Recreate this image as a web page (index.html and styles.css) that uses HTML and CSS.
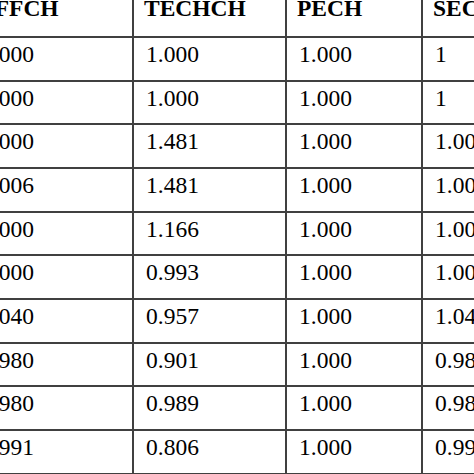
FILE: index.html
```html
<!DOCTYPE html>
<html>
<head>
<meta charset="utf-8">
<link rel="stylesheet" href="styles.css">
</head>
<body>
<table class="grid">
  <colgroup>
    <col class="c1"><col class="c2"><col class="c3"><col class="c4">
  </colgroup>
  <thead>
    <tr><th>EFFCH</th><th>TECHCH</th><th>PECH</th><th>SECH</th></tr>
  </thead>
  <tbody>
    <tr><td>1.000</td><td>1.000</td><td>1.000</td><td>1</td></tr>
    <tr><td>1.000</td><td>1.000</td><td>1.000</td><td>1</td></tr>
    <tr><td>1.000</td><td>1.481</td><td>1.000</td><td>1.000</td></tr>
    <tr><td>1.006</td><td>1.481</td><td>1.000</td><td>1.006</td></tr>
    <tr><td>1.000</td><td>1.166</td><td>1.000</td><td>1.000</td></tr>
    <tr><td>1.000</td><td>0.993</td><td>1.000</td><td>1.000</td></tr>
    <tr><td>1.040</td><td>0.957</td><td>1.000</td><td>1.040</td></tr>
    <tr><td>0.980</td><td>0.901</td><td>1.000</td><td>0.980</td></tr>
    <tr><td>0.980</td><td>0.989</td><td>1.000</td><td>0.980</td></tr>
    <tr><td>0.991</td><td>0.806</td><td>1.000</td><td>0.991</td></tr>
  </tbody>
</table>
</body>
</html>
```
FILE: styles.css
```css
html, body {
  margin: 0;
  padding: 0;
  background: #ffffff;
  overflow: hidden;
  width: 474px;
  height: 474px;
}
.grid {
  border-collapse: collapse;
  table-layout: fixed;
  width: 604px;
  margin-left: -33px;
  margin-top: -8px;
  font-family: "Liberation Serif", "Times New Roman", serif;
  color: #000;
}
.c1 { width: 165px; }
.c2 { width: 153px; }
.c3 { width: 136px; }
.c4 { width: 150px; }
.grid th, .grid td {
  border: 2px solid #404040;
  text-align: left;
  vertical-align: top;
  padding: 2px 0 0 12px;
  white-space: nowrap;
  overflow: hidden;
}
.grid th {
  font-size: 23.5px;
  font-weight: bold;
  height: 44px;
  box-sizing: border-box;
  vertical-align: bottom;
  padding-top: 0;
  padding-left: 10px;
  padding-bottom: 14px;
}
.grid td {
  font-size: 23.5px;
  height: 43.67px;
  box-sizing: border-box;
  padding-top: 3px;
}
```
